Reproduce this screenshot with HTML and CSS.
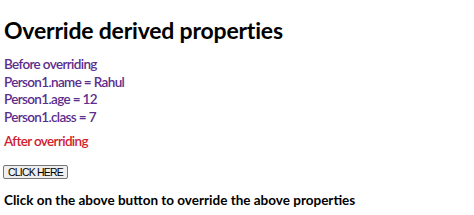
FILE: index.html
```html
<!DOCTYPE html>
<html lang="en">
<head>
    <meta charset="UTF-8">
    <title>Override derived properties</title>
    <link rel="stylesheet" href="styles.css">
</head>
<body>
    <h1>Override derived properties</h1>
    <p class="before">
        Before overriding<br>
        Person1.name = Rahul<br>
        Person1.age = 12<br>
        Person1.class = 7
    </p>
    <p class="after">After overriding</p>
    <button class="btn">CLICK HERE</button>
    <h4>Click on the above button to override the above properties</h4>
</body>
</html>
```

FILE: styles.css
```css
body {
    font-family: Lato, "Open Sans", sans-serif;
    margin: 0;
    padding: 0 3px;
    color: #000;
    background: #fff;
}
h1 {
    font-size: 23px;
    letter-spacing: -0.2px;
    font-weight: bold;
    margin: 16px 0 12px 1px;
}
.before, .after {
    font-size: 13.5px;
    font-weight: 600;
    letter-spacing: -0.65px;
    line-height: 17.5px;
    margin-left: 1px;
}
.before {
    color: #5b2d8c;
    margin-top: 0;
    margin-bottom: 0;
}
.after {
    color: #d0202e;
    margin-top: 7px;
    margin-bottom: 9px;
}
.btn {
    font-family: Arial, "Liberation Sans", sans-serif;
    font-size: 10.5px;
    letter-spacing: -0.8px;
    height: 14px;
    padding: 0 4px;
    background: #efefef;
    border: 1px solid #767676;
    border-radius: 2px;
}
h4 {
    font-size: 13.5px;
    letter-spacing: 0;
    margin: 13px 0 12px 1px;
}
```
